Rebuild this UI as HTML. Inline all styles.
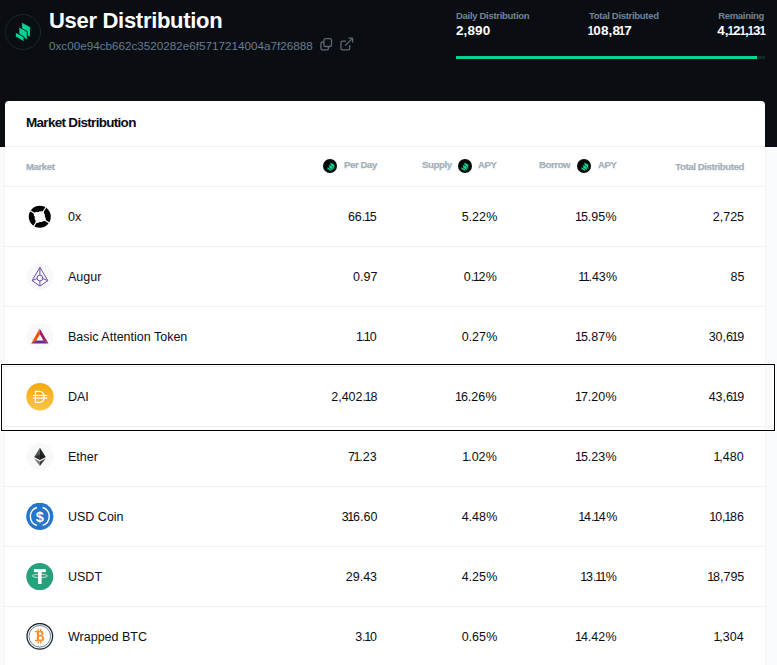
<!DOCTYPE html>
<html><head><meta charset="utf-8">
<style>
*{box-sizing:border-box;margin:0;padding:0}
html,body{width:777px;height:665px;overflow:hidden}
body{position:relative;background:#f9fafb;font-family:"Liberation Sans",sans-serif;color:#0a0d12}
.hdr{position:absolute;left:0;top:0;width:777px;height:147px;background:#0a0d12}
.abs{position:absolute;white-space:nowrap}
.logo{position:absolute;left:5px;top:14px;width:36px;height:36px;border:1px solid #1f262e;border-radius:50%}
.title{left:49px;top:8px;font-size:22px;font-weight:bold;color:#fff;letter-spacing:-0.3px}
.addr{left:49px;top:40px;font-size:11px;color:#667d95;transform:scaleX(1.062);transform-origin:0 0}
.slab{font-size:9.5px;color:#72859a;font-weight:bold;letter-spacing:-0.3px}
.sval{font-size:13.5px;color:#fff;font-weight:bold;letter-spacing:0.1px}
.o1{display:inline-block;transform:scaleX(0.8);margin:0 -1.6px 0 -1.7px}
.bar{position:absolute;left:456px;top:56px;width:309px;height:3px;background:#0f2a22}
.bar i{position:absolute;left:0;top:0;width:301px;height:3px;background:#00d395}
.card{position:absolute;left:5px;top:101px;width:760px;height:600px;background:#fff;border-radius:4px 4px 0 0}
.ctitle{left:26px;top:115px;font-size:13.5px;font-weight:bold;letter-spacing:-0.7px;color:#0a0d12}
.sep{position:absolute;left:5px;width:760px;height:1px;background:#eff0f1}
.th{font-size:9.6px;font-weight:bold;color:#a3b0ba;letter-spacing:-0.4px;-webkit-text-stroke:0.25px #a3b0ba}
.ci{position:absolute;width:14px;height:14px;border-radius:50%;background:#050608}
.name{left:68px;font-size:12.5px;color:#0a0d12}
.num{font-size:12px;color:#0a0d12;text-align:right;transform:scaleX(1.04);transform-origin:100% 50%}
.o{margin-left:-1.3px;letter-spacing:-1.1px}
.pc{margin-left:0.3px}
.ring{position:absolute;left:0;top:363px;width:776px;height:69px;border:1px solid #fff;box-shadow:inset 0 0 0 1px #000,inset 0 0 0 2px #fff}
.ic{position:absolute;left:26px;width:28px;height:28px}
.ic svg{display:block}
</style></head><body>
<div class="hdr"></div>
<svg width="0" height="0" style="position:absolute"><defs><symbol id="comp" viewBox="0 0 16 19">
<path d="M6.6 0.1 L15.4 4.6 L15.4 14.6 L6.6 10.1 Z" fill="#00d395" stroke="#0a0d12" stroke-width="0.9" stroke-linejoin="round"/>
<path d="M3.9 4.6 L12.3 9.2 L12.3 17.1 L3.9 12.5 Z" fill="#00d395" stroke="#0a0d12" stroke-width="0.9" stroke-linejoin="round"/>
<path d="M0.3 9.5 L9.1 14.3 L9.1 18.8 L0.3 14 Z" fill="#00d395" stroke="#0a0d12" stroke-width="0.9" stroke-linejoin="round"/>
</symbol><symbol id="comps" viewBox="0 0 16 19">
<path d="M6.6 0.1 L15.4 4.6 L15.4 14.6 L6.6 10.1 Z" fill="#00e0a0" stroke="#050608" stroke-width="1.1" stroke-linejoin="round"/>
<path d="M3.9 4.6 L12.3 9.2 L12.3 17.1 L3.9 12.5 Z" fill="#00e0a0" stroke="#050608" stroke-width="1.1" stroke-linejoin="round"/>
<path d="M0.3 9.5 L9.1 14.3 L9.1 18.8 L0.3 14 Z" fill="#00e0a0" stroke="#050608" stroke-width="1.1" stroke-linejoin="round"/>
</symbol></defs></svg>
<div class="logo"></div>
<svg class="abs" style="left:14.8px;top:22.3px" width="16" height="20" viewBox="0 0 16 19" preserveAspectRatio="none"><use href="#comp"/></svg>
<div class="abs title">User Distribution</div>
<svg class="abs" style="left:319px;top:37px" width="36" height="14" viewBox="0 0 36 14">
<g fill="none" stroke="#5d6873" stroke-width="1.3" stroke-linejoin="round">
<rect x="1.9" y="5" width="7.6" height="7.9" rx="1.6"/>
<rect x="4.9" y="1.7" width="7.6" height="7.8" rx="1.6" fill="#0a0d12"/>
<path d="M27 4.2 H23.6 Q21.9 4.2 21.9 5.9 V11.2 Q21.9 12.9 23.6 12.9 H29 Q30.7 12.9 30.7 11.2 V8.2"/>
<path d="M26.2 8.6 L33.2 1.6 M29.4 1.2 H33.6 V5.4"/>
</g></svg>
<div class="abs addr">0xc00e94cb662c3520282e6f5717214004a7f26888</div>

<div class="abs slab" style="left:456px;top:10px">Daily Distribution</div>
<div class="abs sval" style="left:456px;top:23px">2,890</div>
<div class="abs slab" style="left:589px;top:10px">Total Distributed</div>
<div class="abs sval" style="left:589px;top:23px"><span class="o1">1</span>08,8<span class="o1">1</span>7</div>
<div class="abs slab" style="right:13px;top:10px">Remaining</div>
<div class="abs sval" style="right:12px;top:23px">4,<span class="o1">1</span>2<span class="o1">1</span>,<span class="o1">1</span>3<span class="o1">1</span></div>
<div class="bar"><i></i></div>

<div class="card"></div>
<div style="position:absolute;left:4px;top:147px;width:1px;height:520px;background:#f3f4f6"></div><div style="position:absolute;left:765px;top:147px;width:1px;height:520px;background:#f3f4f6"></div>
<div class="abs ctitle">Market Distribution</div>
<div class="sep" style="top:146px"></div>
<div class="abs th" style="left:26px;top:160.8px">Market</div>
<div class="ci" style="left:323.4px;top:159.4px"></div><svg class="abs" style="left:327.0px;top:161.9px" width="7.8" height="9.8" viewBox="0 0 16 19"><use href="#comps"/></svg>
<div class="abs th" style="left:344px;top:158.8px">Per Day</div>
<div class="abs th" style="left:422px;top:158.8px">Supply</div>
<div class="ci" style="left:457.5px;top:159.4px"></div><svg class="abs" style="left:461.1px;top:161.9px" width="7.8" height="9.8" viewBox="0 0 16 19"><use href="#comps"/></svg>
<div class="abs th" style="left:478px;top:158.8px">APY</div>
<div class="abs th" style="left:539px;top:158.8px">Borrow</div>
<div class="ci" style="left:577.3px;top:159.4px"></div><svg class="abs" style="left:580.9px;top:161.9px" width="7.8" height="9.8" viewBox="0 0 16 19"><use href="#comps"/></svg>
<div class="abs th" style="left:598px;top:158.8px">APY</div>
<div class="abs th" style="right:33px;top:160.8px">Total Distributed</div>
<div class="sep" style="top:186px"></div>

<div class="ic" style="top:203px"><svg width="28" height="28" viewBox="0 0 28 28"><circle cx="13.8" cy="13.8" r="11" fill="#000"/><g transform="rotate(-12 13.8 13.8)"><path d="M4.5 4.5 L23.1 23.1 M23.1 4.5 L4.5 23.1" stroke="#f9fafb" stroke-width="1.2"/><path d="M8.6 8.7 L11.5 8.2 L12.5 8.9 L15 8.4 L16 8.9 L19 8.6 L18.6 11.5 L19.3 12.5 L18.8 15 L19.3 16 L19 19 L16 18.7 L15 19.3 L12.5 18.8 L11.5 19.4 L8.6 19 L8.9 16 L8.3 15 L8.9 12.5 L8.3 11.5 Z" fill="#f9fafb"/></g></svg></div>
<div class="abs name" style="top:210px">0x</div>
<div class="abs num" style="right:400px;top:210px">66.<span class="o">1</span>5</div>
<div class="abs num" style="right:280px;top:210px">5.22<span class="pc">%</span></div>
<div class="abs num" style="right:160px;top:210px"><span class="o">1</span>5.95<span class="pc">%</span></div>
<div class="abs num" style="right:33px;top:210px">2,725</div>
<div class="sep" style="top:246px"></div>
<div class="ic" style="top:263px"><svg width="28" height="28" viewBox="0 0 28 28"><circle cx="14" cy="13.5" r="13.5" fill="#f7f8fa"/><g fill="none" stroke="#6d4fab" stroke-width="1" stroke-linejoin="round"><path d="M13.9 4.4 L6.1 17.6 L13.9 23.1 L21.9 17.6 Z"/><circle cx="13.9" cy="15" r="2.9"/><path d="M13.9 4.4 V12.1 M11 15.6 L6.1 17.6 M16.8 15.6 L21.9 17.6 M13.9 17.9 V23.1"/></g></svg></div>
<div class="abs name" style="top:270px">Augur</div>
<div class="abs num" style="right:400px;top:270px">0.97</div>
<div class="abs num" style="right:280px;top:270px">0.<span class="o">1</span>2<span class="pc">%</span></div>
<div class="abs num" style="right:160px;top:270px"><span class="o">1</span><span class="o">1</span>.43<span class="pc">%</span></div>
<div class="abs num" style="right:33px;top:270px">85</div>
<div class="sep" style="top:306px"></div>
<div class="ic" style="top:323px"><svg width="28" height="28" viewBox="0 0 28 28"><circle cx="14" cy="13.5" r="13.5" fill="#f7f8fa"/><path d="M13.7 5.6 L13.9 11.2 L10.3 17.5 L5.2 20.4 Z" fill="#ff5000"/><path d="M13.7 5.6 L22.5 20.4 L17.4 17.5 L13.9 11.2 Z" fill="#9e1f63"/><path d="M5.2 20.4 L10.3 17.5 L17.4 17.5 L22.5 20.4 Z" fill="#662d91"/></svg></div>
<div class="abs name" style="top:330px">Basic Attention Token</div>
<div class="abs num" style="right:400px;top:330px"><span class="o">1</span>.<span class="o">1</span>0</div>
<div class="abs num" style="right:280px;top:330px">0.27<span class="pc">%</span></div>
<div class="abs num" style="right:160px;top:330px"><span class="o">1</span>5.87<span class="pc">%</span></div>
<div class="abs num" style="right:33px;top:330px">30,6<span class="o">1</span>9</div>
<div class="sep" style="top:366px"></div>
<div class="ic" style="top:383px"><svg width="28" height="28" viewBox="0 0 28 28"><defs><linearGradient id="dg" x1="0" y1="0" x2="0" y2="1"><stop offset="0" stop-color="#f5a90d"/><stop offset="1" stop-color="#f9c44a"/></linearGradient></defs><circle cx="14" cy="13.8" r="13.7" fill="url(#dg)"/><g fill="none" stroke="#fff" stroke-width="1.3"><path d="M9.4 8.4 H13.2 C16.2 8.4 18 10.8 18 13.9 C18 17 16.2 19.4 13.2 19.4 H9.4 Z"/><path d="M6.8 12.5 H21.4 M6.8 15.1 H21.4" stroke-width="1.2"/></g></svg></div>
<div class="abs name" style="top:390px">DAI</div>
<div class="abs num" style="right:400px;top:390px">2,402.<span class="o">1</span>8</div>
<div class="abs num" style="right:280px;top:390px"><span class="o">1</span>6.26<span class="pc">%</span></div>
<div class="abs num" style="right:160px;top:390px"><span class="o">1</span>7.20<span class="pc">%</span></div>
<div class="abs num" style="right:33px;top:390px">43,6<span class="o">1</span>9</div>
<div class="sep" style="top:426px"></div>
<div class="ic" style="top:443px"><svg width="28" height="28" viewBox="0 0 28 28"><circle cx="14" cy="13.5" r="13.5" fill="#f7f8fa"/><path d="M13.9 4.7 L8.2 13.9 L13.9 16.9 Z" fill="#555"/><path d="M13.9 4.7 L19.7 13.9 L13.9 16.9 Z" fill="#222"/><path d="M8.2 13.9 L13.9 11.5 L19.7 13.9 L13.9 16.9 Z" fill="#1a1a1a" opacity="0.6"/><path d="M8.2 15.4 L13.9 18.5 L13.9 22.9 Z" fill="#777"/><path d="M19.7 15.4 L13.9 18.5 L13.9 22.9 Z" fill="#3d3d3d"/></svg></div>
<div class="abs name" style="top:450px">Ether</div>
<div class="abs num" style="right:400px;top:450px">7<span class="o">1</span>.23</div>
<div class="abs num" style="right:280px;top:450px"><span class="o">1</span>.02<span class="pc">%</span></div>
<div class="abs num" style="right:160px;top:450px"><span class="o">1</span>5.23<span class="pc">%</span></div>
<div class="abs num" style="right:33px;top:450px"><span class="o">1</span>,480</div>
<div class="sep" style="top:486px"></div>
<div class="ic" style="top:503px"><svg width="28" height="28" viewBox="0 0 28 28"><circle cx="13.8" cy="13.3" r="13.6" fill="#2775ca"/><g fill="none" stroke="#fff" stroke-width="1.4"><path d="M11 4.5 A9.3 9.3 0 0 0 11 22.3"/><path d="M16.6 4.5 A9.3 9.3 0 0 1 16.6 22.3"/></g><text x="13.8" y="18.6" text-anchor="middle" font-family="Liberation Sans" font-weight="bold" font-size="14.5" fill="#fff">$</text></svg></div>
<div class="abs name" style="top:510px">USD Coin</div>
<div class="abs num" style="right:400px;top:510px">3<span class="o">1</span>6.60</div>
<div class="abs num" style="right:280px;top:510px">4.48<span class="pc">%</span></div>
<div class="abs num" style="right:160px;top:510px"><span class="o">1</span>4.<span class="o">1</span>4<span class="pc">%</span></div>
<div class="abs num" style="right:33px;top:510px"><span class="o">1</span>0,<span class="o">1</span>86</div>
<div class="sep" style="top:546px"></div>
<div class="ic" style="top:563px"><svg width="28" height="28" viewBox="0 0 28 28"><circle cx="13.8" cy="13.6" r="13.5" fill="#26a17b"/><rect x="7.9" y="6.1" width="11.9" height="3" fill="#fff"/><rect x="12.1" y="9" width="3.5" height="12" fill="#fff"/><ellipse cx="13.9" cy="12.9" rx="7.6" ry="1.7" fill="none" stroke="#fff" stroke-width="0.7"/></svg></div>
<div class="abs name" style="top:570px">USDT</div>
<div class="abs num" style="right:400px;top:570px">29.43</div>
<div class="abs num" style="right:280px;top:570px">4.25<span class="pc">%</span></div>
<div class="abs num" style="right:160px;top:570px"><span class="o">1</span>3.<span class="o">1</span><span class="o">1</span><span class="pc">%</span></div>
<div class="abs num" style="right:33px;top:570px"><span class="o">1</span>8,795</div>
<div class="sep" style="top:606px"></div>
<div class="ic" style="top:623px"><svg width="28" height="28" viewBox="0 0 28 28"><circle cx="13.8" cy="13.3" r="12.8" fill="#fff" stroke="#1c2734" stroke-width="1.3"/><circle cx="13.8" cy="13.3" r="10.8" fill="none" stroke="#5d6e82" stroke-width="0.9"/><path fill-rule="evenodd" fill="#f4922e" d="M9 7.7 H15 C16.6 7.7 17.5 8.8 17.5 10.2 C17.5 11.3 16.9 12.1 16.1 12.5 C17.3 12.9 18.2 13.9 18.2 15.4 C18.2 17.1 17 18.3 15.2 18.3 H9 V16.8 H10.8 V9.2 H9 Z M13 9.5 H14.6 C15.2 9.5 15.5 9.9 15.5 10.6 C15.5 11.3 15.2 11.7 14.6 11.7 H13 Z M13 13.4 H15 C15.7 13.4 16.1 14 16.1 14.9 C16.1 15.8 15.7 16.4 15 16.4 H13 Z"/><path d="M12.2 5.8 V8 M14.6 5.8 V8 M12.2 18 V20.7 M14.6 18 V20.7" stroke="#f4922e" stroke-width="1.1"/></svg></div>
<div class="abs name" style="top:630px">Wrapped BTC</div>
<div class="abs num" style="right:400px;top:630px">3.<span class="o">1</span>0</div>
<div class="abs num" style="right:280px;top:630px">0.65<span class="pc">%</span></div>
<div class="abs num" style="right:160px;top:630px"><span class="o">1</span>4.42<span class="pc">%</span></div>
<div class="abs num" style="right:33px;top:630px"><span class="o">1</span>,304</div>
<div class="ring"></div>
</body></html>
